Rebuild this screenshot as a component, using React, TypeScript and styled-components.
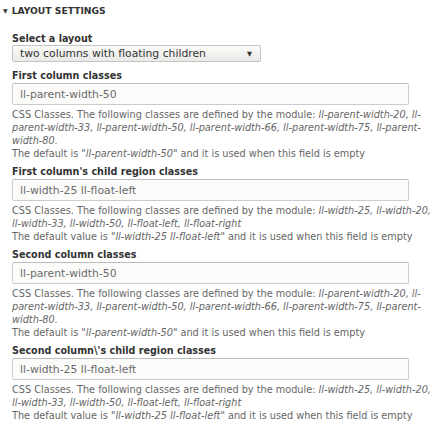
import React from 'react';
import styled, { createGlobalStyle } from 'styled-components';

const GlobalStyle = createGlobalStyle`
  body {
    margin: 0;
    background: #fff;
    font-family: "DejaVu Sans", "Liberation Sans", sans-serif;
    color: #333;
  }
`

const Fieldset = styled.div`
  padding: 4px 0 0 0;
`
const Legend = styled.div`
  display: flex;
  align-items: center;
  gap: 4px;
  padding-left: 3px;
  font-size: 9.2px;
  line-height: 14px;
  font-weight: bold;
  text-transform: uppercase;
  color: #333;
`
const Arrow = styled.span`
  font-size: 6px;
  line-height: 14px;
`
const Body = styled.div`
  padding: 15px 0 0 12px;
`
const Field = styled.div<{ $gap?: number }>`
  margin-bottom: ${p => p.$gap ?? 6}px;
`
const Label = styled.div`
  font-size: 9.6px;
  line-height: 12px;
  font-weight: bold;
  color: #333;
`
const Select = styled.div`
  display: flex;
  align-items: center;
  justify-content: space-between;
  box-sizing: border-box;
  width: 249px;
  height: 17px;
  padding: 0 8px 0 7px;
  border: 1px solid #c4c4c4;
  border-radius: 2px;
  background: linear-gradient(#fbfbf9, #e9e9e6);
  font-size: 10.8px;
  color: #333;
`
const Caret = styled.span`
  font-size: 6.5px;
  color: #333;
`
const Input = styled.div`
  box-sizing: border-box;
  width: 397px;
  height: 22px;
  margin-top: 1px;
  padding: 0 7px;
  display: flex;
  align-items: center;
  border: 1px solid #ccc;
  border-top-color: #bdbdbd;
  border-radius: 2px;
  background: #fbfbf9;
  font-size: 10.8px;
  color: #6a6a6a;
`
const Description = styled.div`
  margin-top: 3px;
  width: 426px;
  font-size: 9.72px;
  line-height: 13px;
  color: #666;
  em {
    font-style: italic;
  }
`

type FieldData = {
  label: string;
  value: string;
  classes: string;
  defaultPrefix: string;
  defaultValue: string;
}

const fields: FieldData[] = [
  {
    label: 'First column classes',
    value: 'll-parent-width-50',
    classes: 'll-parent-width-20, ll-parent-width-33, ll-parent-width-50, ll-parent-width-66, ll-parent-width-75, ll-parent-width-80.',
    defaultPrefix: 'The default is',
    defaultValue: 'll-parent-width-50',
  },
  {
    label: "First column's child region classes",
    value: 'll-width-25 ll-float-left',
    classes: 'll-width-25, ll-width-20, ll-width-33, ll-width-50, ll-float-left, ll-float-right',
    defaultPrefix: 'The default value is',
    defaultValue: 'll-width-25 ll-float-left',
  },
  {
    label: 'Second column classes',
    value: 'll-parent-width-50',
    classes: 'll-parent-width-20, ll-parent-width-33, ll-parent-width-50, ll-parent-width-66, ll-parent-width-75, ll-parent-width-80.',
    defaultPrefix: 'The default is',
    defaultValue: 'll-parent-width-50',
  },
  {
    label: "Second column\\'s child region classes",
    value: 'll-width-25 ll-float-left',
    classes: 'll-width-25, ll-width-20, ll-width-33, ll-width-50, ll-float-left, ll-float-right',
    defaultPrefix: 'The default value is',
    defaultValue: 'll-width-25 ll-float-left',
  },
]

const App: React.FC = () => {
  return <>
    <GlobalStyle />
    <Fieldset>
      <Legend><Arrow>▼</Arrow>Layout settings</Legend>
      <Body>
        <Field $gap={8}>
          <Label>Select a layout</Label>
          <Select>
            <span>two columns with floating children</span>
            <Caret>▼</Caret>
          </Select>
        </Field>
        {fields.map(f => (
          <Field key={f.label}>
            <Label>{f.label}</Label>
            <Input>{f.value}</Input>
            <Description>
              CSS Classes. The following classes are defined by the module: <em>{f.classes}</em>
              <br />
              {f.defaultPrefix} "<em>{f.defaultValue}</em>" and it is used when this field is empty
            </Description>
          </Field>
        ))}
      </Body>
    </Fieldset>
  </>
}

export default App;
